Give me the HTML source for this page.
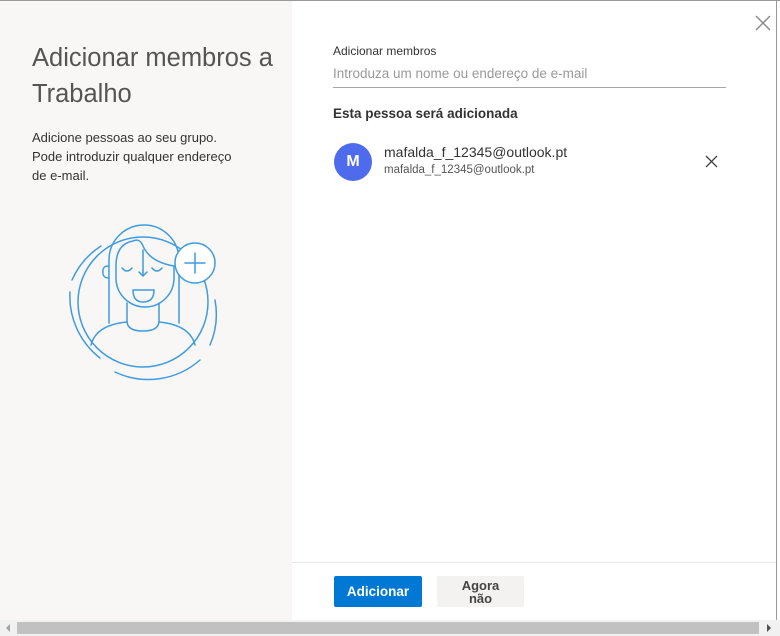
<!DOCTYPE html>
<html><head><meta charset="utf-8"><style>
*{margin:0;padding:0;box-sizing:border-box}
body{width:780px;height:636px;position:relative;overflow:hidden;background:#fff;font-family:"Segoe UI","Liberation Sans",sans-serif;color:#333}
.a{position:absolute;white-space:nowrap}
</style></head><body>
<div class="a" style="left:0;top:0;width:292px;height:620px;background:#f8f7f6"></div>
<div class="a" style="left:0;top:0;width:780px;height:1px;background:#9a9a9a"></div>
<div class="a" style="left:776px;top:0;width:1px;height:620px;background:#9a9a9a"></div>
<div class="a" style="left:32px;top:40px;font-size:25.5px;font-weight:300;line-height:36px;color:#555">Adicionar membros a<br>Trabalho</div>
<div class="a" style="left:32px;top:128px;font-size:13px;line-height:19px;color:#333">Adicione pessoas ao seu grupo.<br>Pode introduzir qualquer endereço<br>de e-mail.</div>
<svg class="a" style="left:60px;top:215px" width="170" height="175" viewBox="60 215 170 175" fill="none" stroke="#3f9be0" stroke-width="1.5" stroke-linecap="round">
<circle cx="143" cy="302" r="65"/>
<path d="M101 246 A78 78 0 0 0 72 280 M70 292 A78 78 0 0 0 100 358 M115 372 A78 78 0 0 0 200 360 M210 345 A78 78 0 0 0 215 300"/>
<path d="M109 323 V260 A35 35 0 0 1 179 260 V323"/>
<path d="M116 266 Q116 244 133 241 Q140 238 143 246 Q150 262 174 266 V278 A29 29 0 0 1 116 278 Z"/>
<path d="M108 266 Q102 266 103 274 Q104 278 108 278"/>
<path d="M122 268 Q127 274 132 268 M152 268 Q157 274 162 268 M143 250 V276 M139 272 L143 276 L147 272"/>
<path d="M133 290 H154 Q154 302 143 302 Q133 302 133 290 Z"/>
<path d="M127 303 V321 Q127 331 143 331 Q159 331 159 321 V303"/>
<path d="M91 345 Q96 325 127 322 M159 322 Q190 325 195 345"/>
<circle cx="195" cy="263" r="20" fill="#fff"/>
<path d="M195 253 V273 M185 263 H205"/>
</svg>
<div class="a" style="left:333px;top:44px;font-size:12px;color:#333">Adicionar membros</div>
<div class="a" style="left:333px;top:66px;font-size:13.5px;color:#999">Introduza um nome ou endereço de e-mail</div>
<div class="a" style="left:333px;top:87px;width:393px;height:1px;background:#a6a6a6"></div>
<div class="a" style="left:333px;top:106px;font-size:13.5px;font-weight:600;color:#333">Esta pessoa será adicionada</div>
<div class="a" style="left:334px;top:143px;width:38px;height:38px;border-radius:50%;background:#4f6bed;color:#fff;font-size:16px;font-weight:700;text-align:center;line-height:38px">M</div>
<div class="a" style="left:384px;top:144px;font-size:14px;color:#333">mafalda_f_12345@outlook.pt</div>
<div class="a" style="left:384px;top:164px;font-size:11.5px;color:#555">mafalda_f_12345@outlook.pt</div>
<svg class="a" style="left:705px;top:155px" width="13" height="13" stroke="#444" stroke-width="1.3"><path d="M1 1 L12 12 M12 1 L1 12"/></svg>
<svg class="a" style="left:755px;top:15px" width="16" height="16" stroke="#888" stroke-width="1.4"><path d="M1 1 L15 15 M15 1 L1 15"/></svg>
<div class="a" style="left:292px;top:562px;width:484px;height:1px;background:#e8e8e8"></div>
<div class="a" style="left:334px;top:576px;width:88px;height:31px;background:#0078d4;border-radius:2px;color:#fff;font-size:13.5px;font-weight:700;text-align:center;line-height:31px">Adicionar</div>
<div class="a" style="left:437px;top:576px;width:87px;height:31px;background:#f3f2f1;border-radius:2px;color:#444;font-size:13px;font-weight:600;text-align:center;line-height:13px;padding-top:3px">Agora<br>não</div>
<div class="a" style="left:0;top:620px;width:780px;height:16px;background:#f1f1f1"></div>
<div class="a" style="left:17px;top:622px;width:742px;height:12px;background:#c1c1c1"></div>
<div class="a" style="left:6px;top:624px;width:0;height:0;border-top:4px solid transparent;border-bottom:4px solid transparent;border-right:4px solid #a3a3a3"></div>
<div class="a" style="left:767px;top:624px;width:0;height:0;border-top:4px solid transparent;border-bottom:4px solid transparent;border-left:4px solid #505050"></div>
</body></html>
